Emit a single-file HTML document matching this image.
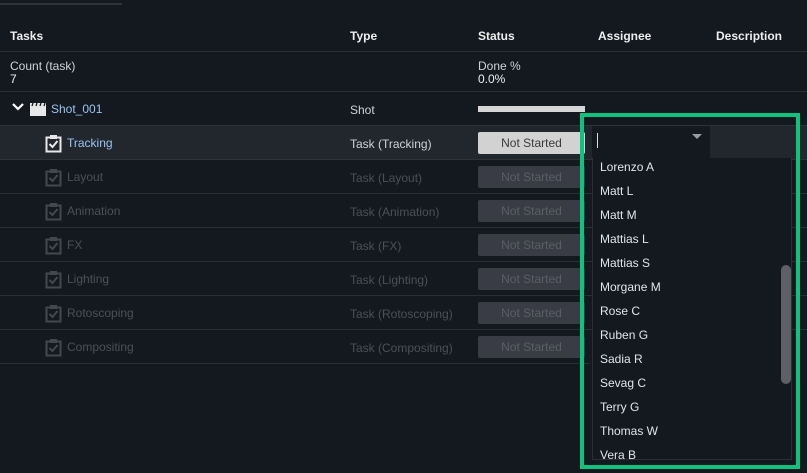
<!DOCTYPE html>
<html><head><style>
*{margin:0;padding:0;box-sizing:border-box}
body{width:807px;height:473px;background:#141920;font-family:"Liberation Sans",sans-serif;font-size:12px;color:#cfd2d6;position:relative;overflow:hidden}
.a{position:absolute;white-space:nowrap}
.ln{position:absolute;left:0;width:807px;height:1px;background:#2a2f37}
.b{position:absolute;left:478px;width:107px;height:22px;border-radius:2px;text-align:center;line-height:22px;background:#393c44;color:#5a5e65}
.dim{color:#4b5058}
.it{position:absolute;left:600px;color:#e2e4e6}
</style></head><body>
<div class="a" style="left:0;top:3px;width:122px;height:2px;background:#2e333b"></div>
<div class="a" style="left:10px;top:29px;font-weight:bold;color:#eee">Tasks</div>
<div class="a" style="left:350px;top:29px;font-weight:bold;color:#eee">Type</div>
<div class="a" style="left:478px;top:29px;font-weight:bold;color:#eee">Status</div>
<div class="a" style="left:598px;top:29px;font-weight:bold;color:#eee">Assignee</div>
<div class="a" style="left:716px;top:29px;font-weight:bold;color:#eee">Description</div>
<div class="ln" style="top:51px"></div>
<div class="a" style="left:10px;top:59px">Count (task)</div>
<div class="a" style="left:10px;top:72px;color:#eee">7</div>
<div class="a" style="left:478px;top:59px">Done %</div>
<div class="a" style="left:478px;top:72px;color:#eee">0.0%</div>
<div class="ln" style="top:91px"></div>
<svg class="a" style="left:12px;top:103px" width="12" height="8"><path d="M1 1l5 5 5-5" stroke="#fff" stroke-width="2.2" fill="none"/></svg>
<svg class="a" style="left:29px;top:102px" width="18" height="15"><rect x="1" y="4" width="16" height="10" fill="#e8e8e8"/><path d="M1 1h16v3H1z" fill="#e8e8e8"/><path d="M4 1l-1 3M8 1l-1 3M12 1l-1 3M16 1l-1 3" stroke="#141920" stroke-width="1.3"/></svg>
<div class="a" style="left:51px;top:102px;color:#9cc3ef">Shot_001</div>
<div class="a" style="left:350px;top:103px">Shot</div>
<div class="a" style="left:478px;top:106px;width:107px;height:6px;background:#d5d5d5"></div>
<div class="a" style="left:0;top:125px;width:807px;height:35px;background:#22262d;border-top:1px solid #2e333a;border-bottom:1px solid #2e333a"></div>
<svg class="a" style="left:45px;top:134px" width="18" height="19"><rect x="1.5" y="3.5" width="14" height="14" fill="none" stroke="#e8e8e8" stroke-width="2"/><rect x="5" y="1" width="7" height="4" fill="#e8e8e8"/><path d="M4.5 10l3 3 5-6" stroke="#e8e8e8" stroke-width="2" fill="none"/></svg>
<div class="a" style="left:67px;top:136px;color:#9cc3ef">Tracking</div>
<div class="a" style="left:350px;top:137px">Task (Tracking)</div>
<div class="b" style="top:132px;background:#d2d2d2;color:#3a3a3a">Not Started</div>

<div class="ln" style="top:193px"></div><div class="ln" style="top:227px"></div><div class="ln" style="top:261px"></div><div class="ln" style="top:295px"></div><div class="ln" style="top:329px"></div><div class="ln" style="top:363px;width:590px"></div>

<svg class="a" style="left:45px;top:168px" width="18" height="19"><rect x="1.5" y="3.5" width="14" height="14" fill="none" stroke="#43484f" stroke-width="2"/><rect x="5" y="1" width="7" height="4" fill="#43484f"/><path d="M4.5 10l3 3 5-6" stroke="#43484f" stroke-width="2" fill="none"/></svg>
<div class="a dim" style="left:67px;top:170px">Layout</div><div class="a dim" style="left:350px;top:171px">Task (Layout)</div><div class="b" style="top:166px">Not Started</div>
<svg class="a" style="left:45px;top:202px" width="18" height="19"><rect x="1.5" y="3.5" width="14" height="14" fill="none" stroke="#43484f" stroke-width="2"/><rect x="5" y="1" width="7" height="4" fill="#43484f"/><path d="M4.5 10l3 3 5-6" stroke="#43484f" stroke-width="2" fill="none"/></svg>
<div class="a dim" style="left:67px;top:204px">Animation</div><div class="a dim" style="left:350px;top:205px">Task (Animation)</div><div class="b" style="top:200px">Not Started</div>
<svg class="a" style="left:45px;top:236px" width="18" height="19"><rect x="1.5" y="3.5" width="14" height="14" fill="none" stroke="#43484f" stroke-width="2"/><rect x="5" y="1" width="7" height="4" fill="#43484f"/><path d="M4.5 10l3 3 5-6" stroke="#43484f" stroke-width="2" fill="none"/></svg>
<div class="a dim" style="left:67px;top:238px">FX</div><div class="a dim" style="left:350px;top:239px">Task (FX)</div><div class="b" style="top:234px">Not Started</div>
<svg class="a" style="left:45px;top:270px" width="18" height="19"><rect x="1.5" y="3.5" width="14" height="14" fill="none" stroke="#43484f" stroke-width="2"/><rect x="5" y="1" width="7" height="4" fill="#43484f"/><path d="M4.5 10l3 3 5-6" stroke="#43484f" stroke-width="2" fill="none"/></svg>
<div class="a dim" style="left:67px;top:272px">Lighting</div><div class="a dim" style="left:350px;top:273px">Task (Lighting)</div><div class="b" style="top:268px">Not Started</div>
<svg class="a" style="left:45px;top:304px" width="18" height="19"><rect x="1.5" y="3.5" width="14" height="14" fill="none" stroke="#43484f" stroke-width="2"/><rect x="5" y="1" width="7" height="4" fill="#43484f"/><path d="M4.5 10l3 3 5-6" stroke="#43484f" stroke-width="2" fill="none"/></svg>
<div class="a dim" style="left:67px;top:306px">Rotoscoping</div><div class="a dim" style="left:350px;top:307px">Task (Rotoscoping)</div><div class="b" style="top:302px">Not Started</div>
<svg class="a" style="left:45px;top:338px" width="18" height="19"><rect x="1.5" y="3.5" width="14" height="14" fill="none" stroke="#43484f" stroke-width="2"/><rect x="5" y="1" width="7" height="4" fill="#43484f"/><path d="M4.5 10l3 3 5-6" stroke="#43484f" stroke-width="2" fill="none"/></svg>
<div class="a dim" style="left:67px;top:340px">Compositing</div><div class="a dim" style="left:350px;top:341px">Task (Compositing)</div><div class="b" style="top:336px">Not Started</div>

<div class="a" style="left:592px;top:126px;width:118px;height:32px;background:#141920"></div>
<div class="a" style="left:597px;top:133px;width:1px;height:15px;background:#ddd"></div>
<svg class="a" style="left:692px;top:134px" width="10" height="5"><path d="M0 0h10L5 5z" fill="#9a9ca0"/></svg>
<div class="a" style="left:592px;top:158px;width:200px;height:302px;background:#141920;border:1px solid #2b2f37;border-top:none"></div>
<div class="it a" style="top:160px">Lorenzo A</div>
<div class="it a" style="top:184px">Matt L</div>
<div class="it a" style="top:208px">Matt M</div>
<div class="it a" style="top:232px">Mattias L</div>
<div class="it a" style="top:256px">Mattias S</div>
<div class="it a" style="top:280px">Morgane M</div>
<div class="it a" style="top:304px">Rose C</div>
<div class="it a" style="top:328px">Ruben G</div>
<div class="it a" style="top:352px">Sadia R</div>
<div class="it a" style="top:376px">Sevag C</div>
<div class="it a" style="top:400px">Terry G</div>
<div class="it a" style="top:424px">Thomas W</div>
<div class="a" style="left:600px;top:448px;height:11px;overflow:hidden;color:#e2e4e6">Vera B</div>
<div class="a" style="left:781px;top:265px;width:10px;height:119px;border-radius:5px;background:#5e6065"></div>
<div class="a" style="left:580px;top:113px;width:220px;height:356px;border:4px solid #0fc27e"></div>
</body></html>
